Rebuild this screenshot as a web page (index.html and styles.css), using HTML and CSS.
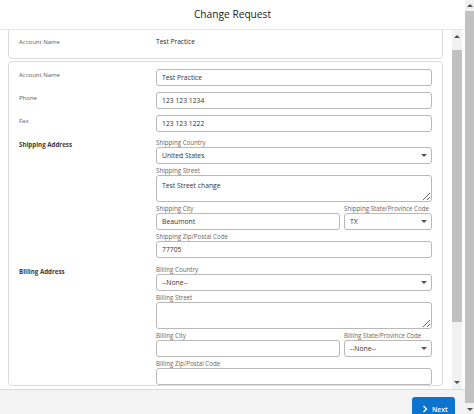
FILE: index.html
```html
<!DOCTYPE html>
<html lang="en">
<head>
  <meta charset="UTF-8">
  <meta name="viewport" content="width=device-width, initial-scale=1.0">
  <title>Change Request</title>
  <link rel="stylesheet" href="styles.css">
</head>
<body>
  <div class="window">
    <div class="modal">
      <div class="modal-header">Change Request</div>

      <div class="modal-body">
        <div class="scroll-area">
          <!-- read only summary, scrolled a little so its top is hidden -->
          <div class="card card-summary">
            <div class="row">
              <div class="row-label">Account Name</div>
              <div class="row-value">Test Practice</div>
            </div>
          </div>

          <div class="card card-edit">
            <div class="row">
              <div class="row-label">Account Name</div>
              <input class="input" type="text" value="Test Practice">
            </div>
            <div class="row">
              <div class="row-label">Phone</div>
              <input class="input" type="text" value="123 123 1234">
            </div>
            <div class="row">
              <div class="row-label">Fax</div>
              <input class="input" type="text" value="123 123 1222">
            </div>

            <div class="row address">
              <div class="row-label section-label">Shipping Address</div>
              <div class="address-fields">
                <div class="group">
                  <label class="field-label">Shipping Country</label>
                  <div class="select-wrap">
                    <select class="input select"><option>United States</option></select>
                    <span class="caret"></span>
                  </div>
                </div>
                <div class="group">
                  <label class="field-label">Shipping Street</label>
                  <textarea class="input textarea">Test Street change</textarea>
                </div>
                <div class="group split">
                  <div>
                    <label class="field-label">Shipping City</label>
                    <input class="input" type="text" value="Beaumont">
                  </div>
                  <div>
                    <label class="field-label">Shipping State/Province Code</label>
                    <div class="select-wrap">
                      <select class="input select"><option>TX</option></select>
                      <span class="caret"></span>
                    </div>
                  </div>
                </div>
                <div class="group">
                  <label class="field-label">Shipping Zip/Postal Code</label>
                  <input class="input" type="text" value="77705">
                </div>
              </div>
            </div>

            <div class="row address billing">
              <div class="row-label section-label">Billing Address</div>
              <div class="address-fields">
                <div class="group">
                  <label class="field-label">Billing Country</label>
                  <div class="select-wrap">
                    <select class="input select"><option>--None--</option></select>
                    <span class="caret"></span>
                  </div>
                </div>
                <div class="group">
                  <label class="field-label">Billing Street</label>
                  <textarea class="input textarea"></textarea>
                </div>
                <div class="group split">
                  <div>
                    <label class="field-label">Billing City</label>
                    <input class="input" type="text" value="">
                  </div>
                  <div>
                    <label class="field-label">Billing State/Province Code</label>
                    <div class="select-wrap">
                      <select class="input select"><option>--None--</option></select>
                      <span class="caret"></span>
                    </div>
                  </div>
                </div>
                <div class="group">
                  <label class="field-label">Billing Zip/Postal Code</label>
                  <input class="input" type="text" value="">
                </div>
              </div>
            </div>
          </div>
        </div>

        <div class="scrollbar inner-bar">
          <div class="sb-btn"><span class="tri-up"></span></div>
          <div class="sb-thumb"></div>
          <div class="sb-btn"><span class="tri-down"></span></div>
        </div>
      </div>

      <div class="modal-footer">
        <button class="btn-next" type="button">
          <svg width="6" height="8" viewBox="0 0 6 8"><path d="M1.5 1l3 3-3 3" fill="none" stroke="#fff" stroke-width="1.3"/></svg>
          Next
        </button>
      </div>
    </div>

    <div class="scrollbar outer-bar">
      <div class="sb-btn"><span class="tri-up"></span></div>
      <div class="sb-thumb"></div>
      <div class="sb-btn"><span class="tri-down"></span></div>
    </div>
  </div>
</body>
</html>
```

FILE: styles.css
```css
body {
  margin: 0;
  background-color: #fff;
  color: #181818;
  font-family: "Open Sans", Arial, sans-serif;
  overflow: hidden;
}

.window {
  display: flex;
  width: 474px;
  height: 414px;
}

.modal {
  display: flex;
  flex-direction: column;
  width: 465px;
  height: 414px;
}

.modal-header {
  height: 29px;
  line-height: 29px;
  border-bottom: 1px solid #e5e5e5;
  text-align: center;
  font-size: 10.2px;
  color: #222;
}

.modal-body {
  flex: 1;
  display: flex;
  padding-right: 3px;
  overflow: hidden;
}

.scroll-area {
  flex: 1;
  padding: 0 9px 0 8px;
  overflow: hidden;
}

.card {
  border: 1px solid #dddbda;
  border-radius: 4px;
}

.card-summary {
  margin-top: -7px;
  padding: 13px 10px 11px;
}

.card-edit {
  margin-top: 2px;
  padding: 7px 10px 0;
}

.row {
  display: grid;
  grid-template-columns: 137px 1fr;
  margin-bottom: 6px;
}

.row-label {
  font-size: 6px;
  line-height: 13px;
  color: #5c5c5c;
}

.row-value {
  font-size: 6.6px;
  line-height: 13px;
  color: #2b2b2b;
}

.card-summary .row {
  margin-bottom: 0;
}

.card-summary .row-label,
.card-summary .row-value {
  line-height: 10px;
}

.section-label {
  font-size: 6.2px;
  font-weight: bold;
  color: #3a3a3a;
  line-height: 10px;
  padding-top: 1px;
}

.address {
  margin-top: 7px;
  margin-bottom: 0;
}

.billing {
  margin-top: 8px;
}

.address-fields {
  display: flex;
  flex-direction: column;
  gap: 3px;
}

.field-label {
  display: block;
  font-size: 6.2px;
  line-height: 8px;
  color: #666;
  white-space: nowrap;
}

.split {
  display: grid;
  grid-template-columns: 1fr 88px;
  gap: 4px;
}

.input {
  display: block;
  box-sizing: border-box;
  width: 100%;
  height: 17px;
  margin: 0;
  padding: 0 5px;
  border: 1px solid #b9b9b9;
  border-radius: 3px;
  background-color: #fff;
  font-family: inherit;
  font-size: 6.8px;
  color: #333;
  outline: none;
}

.textarea {
  height: 27px;
  padding: 5px 5px;
  resize: vertical;
}

.select {
  appearance: none;
  -webkit-appearance: none;
}

.select-wrap {
  position: relative;
}

.caret {
  position: absolute;
  right: 5px;
  top: 7px;
  border-left: 3px solid transparent;
  border-right: 3px solid transparent;
  border-top: 3px solid #555;
}

.modal-footer {
  height: 25px;
  border-top: 1px solid #dddbda;
  background-color: #f3f3f3;
  display: flex;
  justify-content: flex-end;
  align-items: flex-start;
  padding: 7px 10px 0 0;
  box-sizing: border-box;
  overflow: hidden;
}

.btn-next {
  display: flex;
  align-items: center;
  gap: 4px;
  flex-shrink: 0;
  width: 43px;
  height: 24px;
  padding: 0 0 0 10px;
  border: none;
  border-radius: 3px;
  background-color: #0b74d0;
  color: #fff;
  font-family: inherit;
  font-size: 6.8px;
  font-weight: 600;
}

/* fake scrollbars */
.scrollbar {
  display: flex;
  flex-direction: column;
  background-color: #f1f1f1;
}

.inner-bar {
  width: 10px;
}

.outer-bar {
  width: 9px;
}

.sb-btn {
  height: 13px;
  display: flex;
  align-items: center;
  justify-content: center;
}

.sb-thumb {
  flex: 1;
  background-color: #c1c1c1;
}

.inner-bar .sb-thumb {
  margin: 7px 0 54px;
}

.outer-bar .sb-btn {
  height: 10px;
}

.outer-bar .sb-thumb {
  margin: 1px 0 1px;
}

.tri-up {
  border-left: 3px solid transparent;
  border-right: 3px solid transparent;
  border-bottom: 3px solid #505050;
}

.tri-down {
  border-left: 3px solid transparent;
  border-right: 3px solid transparent;
  border-top: 3px solid #505050;
}
```
